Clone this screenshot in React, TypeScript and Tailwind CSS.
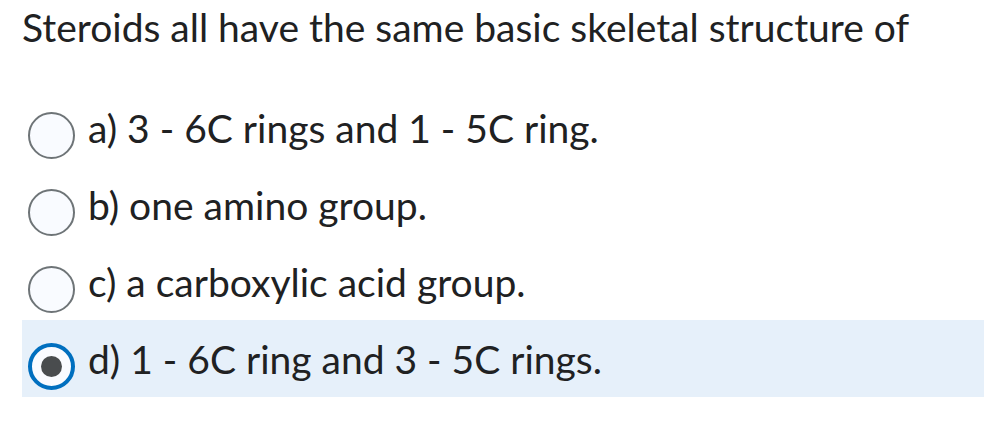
import React from "react";

const options = [
  { id: "a", label: "a) 3 - 6C rings and 1 - 5C ring." },
  { id: "b", label: "b) one amino group." },
  { id: "c", label: "c) a carboxylic acid group." },
  { id: "d", label: "d) 1 - 6C ring and 3 - 5C rings." },
];

function Radio({ checked }: { checked: boolean }) {
  if (checked) {
    return (
      <span className="flex h-[47px] w-[47px] shrink-0 items-center justify-center rounded-full border-[4px] border-[#006fbf] bg-[#f9fbff]">
        <span className="h-[21px] w-[21px] rounded-full bg-[#494c4e]" />
      </span>
    );
  }
  return (
    <span className="h-[47px] w-[47px] shrink-0 rounded-full border-[2px] border-[#6e7477] bg-[#f9fbff]" />
  );
}

export default function App() {
  const selected = "d";
  return (
    <div className="h-[440px] w-[984px] bg-white pl-[22px] text-[#202122] [font-family:Lato,'Liberation_Sans',sans-serif]">
      <h1 className="pt-px text-[39px] leading-[52px] font-normal">
        Steroids all have the same basic skeletal structure of
      </h1>

      <div className="mt-[36px] flex flex-col">
        {options.map((o) => {
          const checked = o.id === selected;
          return (
            <label
              key={o.id}
              className={
                "flex h-[77px] items-center gap-[13px] pt-[15px] pl-[6px] " +
                (checked ? "bg-[#e6f0fa]" : "")
              }
            >
              <Radio checked={checked} />
              <span className="mb-[14px] text-[39px] leading-[44px]">{o.label}</span>
            </label>
          );
        })}
      </div>
    </div>
  );
}
